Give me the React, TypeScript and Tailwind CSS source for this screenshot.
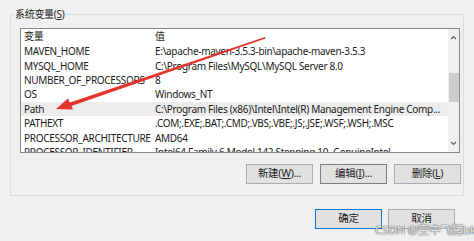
const rows = [
  { name: "MAVEN_HOME", value: "E:\\apache-maven-3.5.3-bin\\apache-maven-3.5.3" },
  { name: "MYSQL_HOME", value: "C:\\Program Files\\MySQL\\MySQL Server 8.0" },
  { name: "NUMBER_OF_PROCESSORS", value: "8" },
  { name: "OS", value: "Windows_NT" },
  { name: "Path", value: "C:\\Program Files (x86)\\Intel\\Intel(R) Management Engine Comp...", selected: true },
  { name: "PATHEXT", value: ".COM;.EXE;.BAT;.CMD;.VBS;.VBE;.JS;.JSE;.WSF;.WSH;.MSC" },
  { name: "PROCESSOR_ARCHITECTURE", value: "AMD64" },
  { name: "PROCESSOR_IDENTIFIER", value: "Intel64 Family 6 Model 142 Stepping 10, GenuineIntel" },
];

function Mnemonic({ label, hotkey }: { label: string; hotkey: string }) {
  return (
    <span>
      {label}(<span className="underline">{hotkey}</span>)
    </span>
  );
}

function DialogButton({ children, variant }: { children: React.ReactNode; variant?: "focus" | "default" }) {
  const border =
    variant === "default" ? "border-[#0078d7]" : variant === "focus" ? "border-[#7f7f7f]" : "border-[#adadad]";
  return (
    <div
      className={`flex h-[20px] w-[67px] items-center justify-center border ${border} bg-[#e1e1e1] text-[10.5px] tracking-[-0.3px] text-[#222]`}
    >
      {children}
    </div>
  );
}

export default function App() {
  return (
    <div
      className="relative h-[241px] w-[474px] overflow-hidden bg-[#f0f0f0] text-[#1b1b1b]"
      style={{ fontFamily: '"Noto Sans", "Noto Sans CJK SC", sans-serif' }}
    >
      <div className="pl-[10px] pt-[14px]">
        {/* group box */}
        <div className="relative h-[182px] w-[454px] border border-[#dcdcdc]">
          <span className="absolute left-[3px] top-[-8px] bg-[#f0f0f0] px-[1px] text-[10px] leading-[14px] tracking-[-0.3px] text-[#222]">
            系统变量(<span className="underline">S</span>)
          </span>

          <div className="ml-[9px] mt-[13px] flex h-[125px] w-[440px] border border-[#828790] bg-white">
            <div className="flex min-w-0 flex-1 flex-col overflow-hidden text-[10px] tracking-[-0.3px]">
              <div className="flex h-[15px] shrink-0 items-center">
                <span className="w-[134px] pl-[3px]">变量</span>
                <span>值</span>
              </div>
              {rows.map((row) => (
                <div
                  key={row.name}
                  className={`flex h-[14.4px] shrink-0 items-center whitespace-nowrap leading-[14px] ${row.selected ? "bg-[#ececec]" : ""}`}
                >
                  <span className="w-[134px] shrink-0 pl-[3px]">{row.name}</span>
                  <span>{row.value}</span>
                </div>
              ))}
            </div>
            {/* scrollbar */}
            <div className="flex w-[11px] shrink-0 flex-col items-center bg-[#f0f0f0]">
              <svg width="11" height="14" viewBox="0 0 11 14" className="mt-[2px]">
                <path d="M3 8 L5.5 5.5 L8 8" fill="none" stroke="#606060" strokeWidth="1.2" />
              </svg>
              <div className="mt-[28px] h-[29px] w-[10px] bg-[#cdcdcd]" />
              <div className="flex-1" />
              <svg width="11" height="14" viewBox="0 0 11 14" className="mb-[2px]">
                <path d="M3 6 L5.5 8.5 L8 6" fill="none" stroke="#606060" strokeWidth="1.2" />
              </svg>
            </div>
          </div>

          <div className="ml-[235px] mt-[11px] flex gap-[7px]">
            <DialogButton>
              <Mnemonic label="新建" hotkey="W" />...
            </DialogButton>
            <DialogButton variant="focus">
              <Mnemonic label="编辑" hotkey="I" />...
            </DialogButton>
            <DialogButton>
              <Mnemonic label="删除" hotkey="L" />
            </DialogButton>
          </div>
        </div>

        <div className="ml-[305px] mt-[13px] flex gap-[6px]">
          <DialogButton variant="default">确定</DialogButton>
          <DialogButton>取消</DialogButton>
        </div>
      </div>

      {/* red annotation arrow */}
      <svg className="pointer-events-none absolute left-0 top-0" width="474" height="241" viewBox="0 0 474 241">
        <polygon points="265,37 265.5,38.5 70,106.5 68.5,103" fill="#e8332c" />
        <polygon points="56,109 68,98.5 73,109.5" fill="#e8332c" />
      </svg>

      <span className="absolute left-[375px] top-[222px] whitespace-nowrap text-[11.5px] leading-[15px] tracking-[-0.2px] text-[#ececec] [text-shadow:0_0_1px_#555,0_0_1px_#777,0_0_2px_#999]">
        CSDN @空中飞猪bki
      </span>
    </div>
  );
}
